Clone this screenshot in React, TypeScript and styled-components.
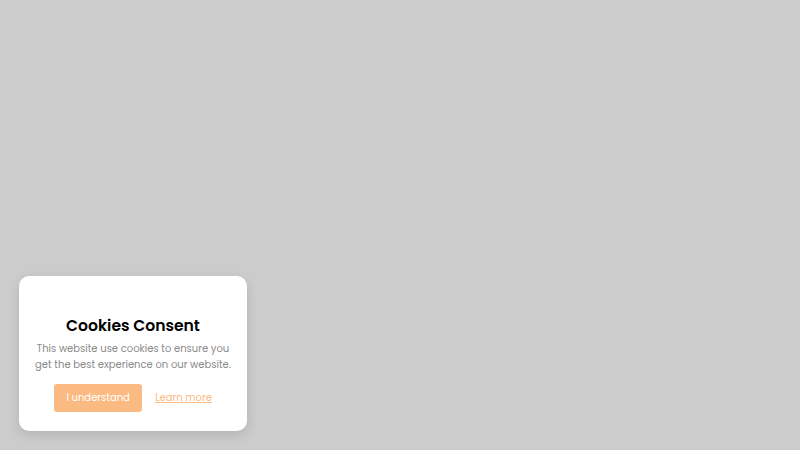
import React from "react";
import styled, { createGlobalStyle } from "styled-components";

const GlobalStyle = createGlobalStyle`
  html, body {
    margin: 0;
    padding: 0;
    background: #cccccc;
  }
  * { box-sizing: border-box; }
`;

const Page = styled.div`
  width: 100vw;
  height: 100vh;
  display: flex;
  align-items: flex-end;
  justify-content: flex-start;
  padding: 0 0 19px 19px;
  font-family: "Poppins", Inter, "Noto Sans", sans-serif;
`;

const Card = styled.section`
  width: 228px;
  height: 155px;
  background: #ffffff;
  border-radius: 10px;
  box-shadow: 0 4px 12px rgba(0, 0, 0, 0.12);
  display: flex;
  flex-direction: column;
  align-items: center;
  padding: 40px 8px 0;
`;

const Title = styled.h2`
  margin: 0;
  font-size: 15.6px;
  line-height: 20px;
  font-weight: 600;
  color: #000000;
`;

const Text = styled.p`
  margin: 5px 0 0;
  font-size: 10px;
  line-height: 16px;
  font-weight: 400;
  color: #8a8a8a;
  text-align: center;
  white-space: nowrap;
`;

const Actions = styled.div`
  margin-top: 11px;
  display: flex;
  align-items: center;
  gap: 13px;
`;

const Button = styled.button`
  width: 88px;
  height: 28px;
  border: none;
  border-radius: 3px;
  background: #fbba82;
  color: #ffffff;
  font-family: inherit;
  font-size: 10px;
  font-weight: 400;
  cursor: pointer;
  padding: 0;
`;

const Link = styled.a`
  font-size: 10px;
  color: #fbba82;
  text-decoration: underline;
  cursor: pointer;
`;

export default function App() {
  return (
    <>
      <GlobalStyle />
      <Page>
        <Card>
          <Title>Cookies Consent</Title>
          <Text>
            This website use cookies to ensure you
            <br />
            get the best experience on our website.
          </Text>
          <Actions>
            <Button>I understand</Button>
            <Link href="#">Learn more</Link>
          </Actions>
        </Card>
      </Page>
    </>
  );
}
